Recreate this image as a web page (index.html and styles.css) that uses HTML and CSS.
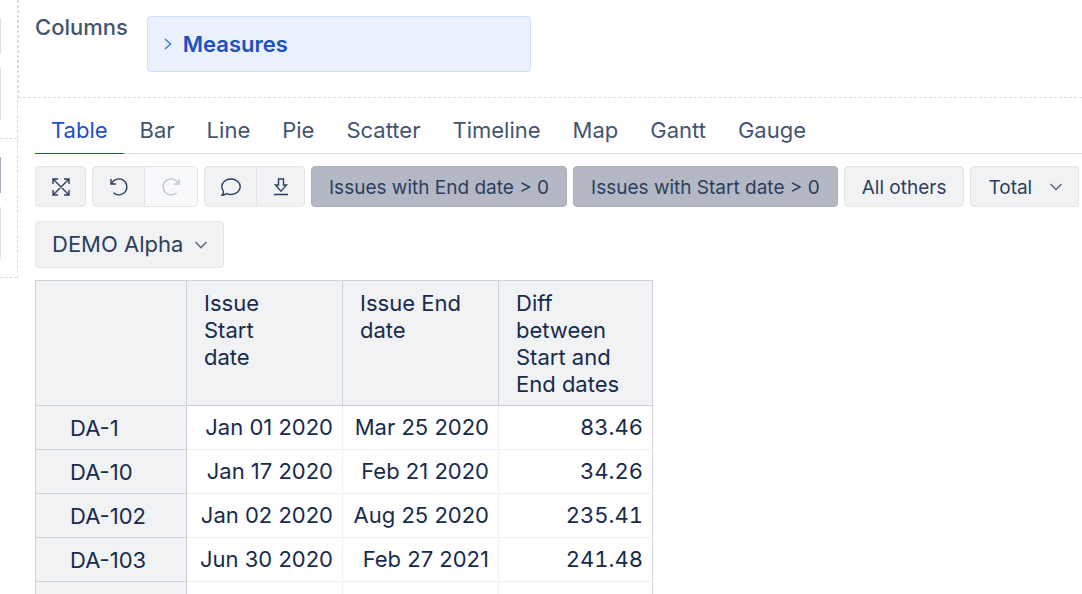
FILE: index.html
```html
<!DOCTYPE html>
<html lang="en">
  <head>
    <title>Report</title>
    <meta charset="UTF-8" />
    <link rel="stylesheet" href="styles.css">
  </head>
  <body>
    <div class="report">

      <aside class="sidebar">
        <div class="sidebar__section">
          <div class="sidebar__item"></div>
          <div class="sidebar__item sidebar__item--tall"></div>
        </div>
        <div class="sidebar__section">
          <div class="sidebar__item sidebar__item--active"></div>
          <div class="sidebar__item sidebar__item--tall"></div>
        </div>
      </aside>

      <main class="content">
        <section class="columns">
          <h2 class="columns__title">Columns</h2>
          <button type="button" class="measures">
            <svg class="measures__arrow" viewBox="0 0 8 14" fill="none" stroke="currentColor" stroke-width="1.5"><path d="M1 2l5.500 5L1 12" /></svg>
            <span>Measures</span>
          </button>
        </section>

        <nav class="tabs">
          <a class="tabs__item tabs__item--active" href="#table">Table</a>
          <a class="tabs__item" href="#bar">Bar</a>
          <a class="tabs__item" href="#line">Line</a>
          <a class="tabs__item" href="#pie">Pie</a>
          <a class="tabs__item" href="#scatter">Scatter</a>
          <a class="tabs__item" href="#timeline">Timeline</a>
          <a class="tabs__item" href="#map">Map</a>
          <a class="tabs__item" href="#gantt">Gantt</a>
          <a class="tabs__item" href="#gauge">Gauge</a>
        </nav>

        <div class="toolbar">
          <button type="button" class="btn btn--icon" aria-label="Full screen">
            <svg class="icon" viewBox="0 0 20 20"><path d="M2 2l16 16M18 2L2 18M2 7V2h5M13 2h5v5M18 13v5h-5M7 18H2v-5" /></svg>
          </button>
          <div class="btn-group">
            <button type="button" class="btn btn--icon" aria-label="Undo">
              <svg class="icon" viewBox="0 0 20 20"><path d="M2 2v5h5M2.500 6.800A8 8 0 1 1 4.500 15.800" /></svg>
            </button>
            <button type="button" class="btn btn--icon" aria-label="Redo" disabled>
              <svg class="icon" viewBox="0 0 20 20"><path d="M18 2v5h-5M17.500 6.800A8 8 0 1 0 15.500 15.800" /></svg>
            </button>
          </div>
          <div class="btn-group">
            <button type="button" class="btn btn--icon" aria-label="Comment">
              <svg class="icon" viewBox="0 0 20 20"><path d="M1 18.200c1.300-1.200 1.700-2.800 1.200-4.300C1.300 12.700.8 11.300.8 9.800.8 5.500 4.900 2 10 2s9.200 3.500 9.200 7.800-4.100 7.700-9.200 7.700c-1.600 0-3-.3-4.300-.9-1.400.9-3 1.600-4.700 1.600z" /></svg>
            </button>
            <button type="button" class="btn btn--icon btn--narrow" aria-label="Download">
              <svg class="icon" viewBox="0 0 20 20"><path d="M3 17.500h14M7.500 2h5v6H15.500L10 14.200 4.500 8h3z" /></svg>
            </button>
          </div>
          <button type="button" class="btn btn--selected">Issues with End date &gt; 0</button>
          <button type="button" class="btn btn--selected">Issues with Start date &gt; 0</button>
          <button type="button" class="btn">All others</button>
          <div class="dropdown">
            <select class="btn dropdown__select" aria-label="Total">
              <option>Total</option>
            </select>
            <svg class="dropdown__arrow" viewBox="0 0 14 8"><path d="M1.500 1L7 6.500 12.500 1" /></svg>
          </div>
          <div class="dropdown dropdown--project">
            <select class="btn dropdown__select" aria-label="Project">
              <option>DEMO Alpha</option>
            </select>
            <svg class="dropdown__arrow" viewBox="0 0 14 8"><path d="M1.500 1L7 6.500 12.500 1" /></svg>
          </div>
        </div>

        <table class="results">
          <colgroup>
            <col class="results__issue">
            <col class="results__date">
            <col class="results__date">
            <col class="results__diff">
          </colgroup>
          <thead>
            <tr>
              <td></td>
              <th scope="col">Issue Start date</th>
              <th scope="col">Issue End date</th>
              <th scope="col">Diff between Start and End dates</th>
            </tr>
          </thead>
          <tbody>
            <tr>
              <th scope="row">DA-1</th>
              <td>Jan 01 2020</td>
              <td>Mar 25 2020</td>
              <td>83.46</td>
            </tr>
            <tr>
              <th scope="row">DA-10</th>
              <td>Jan 17 2020</td>
              <td>Feb 21 2020</td>
              <td>34.26</td>
            </tr>
            <tr>
              <th scope="row">DA-102</th>
              <td>Jan 02 2020</td>
              <td>Aug 25 2020</td>
              <td>235.41</td>
            </tr>
            <tr>
              <th scope="row">DA-103</th>
              <td>Jun 30 2020</td>
              <td>Feb 27 2021</td>
              <td>241.48</td>
            </tr>
            <tr>
              <th scope="row"></th>
              <td></td>
              <td></td>
              <td></td>
            </tr>
          </tbody>
        </table>
      </main>

    </div>
  </body>
</html>
```
FILE: styles.css
```css
* {
  box-sizing: border-box;
}

body {
  margin: 0;
  font-family: 'Inter', Arial, sans-serif;
  font-size: 22px;
  line-height: 27px;
  color: #172b4d;
  background: #ffffff;
}

.report {
  display: flex;
  align-items: flex-start;
  height: 100vh;
  overflow: hidden;
}

/* sidebar */

.sidebar {
  flex: none;
  width: 18px;
  border-right: 1px dashed #dcdde0;
}

.sidebar__section {
  display: flex;
  flex-direction: column;
  gap: 14px;
  height: 139px;
  padding-top: 18px;
  border-bottom: 1px dashed #dcdde0;
}

.sidebar__item {
  width: 1px;
  height: 36px;
  background: #dfe1e6;
}

.sidebar__item--tall {
  height: 52px;
}

.sidebar__item--active {
  background: #a5adba;
}

/* content */

.content {
  flex: 1;
  min-width: 0;
}

.columns {
  display: flex;
  align-items: flex-start;
  gap: 19px;
  padding: 16px 16px 25px;
  border-left: 1px dashed #dcdde0;
  border-bottom: 1px dashed #dcdde0;
}

.columns__title {
  margin: 0;
  font-size: 22px;
  line-height: 22px;
  font-weight: 500;
  color: #44546f;
}

.measures {
  display: flex;
  align-items: center;
  gap: 11px;
  width: 384px;
  height: 56px;
  padding: 0 16px;
  font: inherit;
  font-weight: 600;
  color: #1d50c4;
  background: #eaf1fd;
  border: 1px solid #ccdffb;
  border-radius: 4px;
  cursor: pointer;
}

.measures__arrow {
  width: 8px;
  height: 14px;
  color: #3b7cf0;
}

.tabs {
  display: flex;
  margin-left: 17px;
  padding-top: 12px;
  border-bottom: 1px solid #dcdde0;
}

.tabs__item {
  height: 44px;
  margin-bottom: -1px;
  padding: 7px 16px;
  color: #44546f;
  text-decoration: none;
}

.tabs__item--active {
  color: #1d50c4;
  border-bottom: 1px solid #1d50c4;
}

/* toolbar */

.toolbar {
  display: flex;
  flex-wrap: wrap;
  gap: 14px 6px;
  margin: 12px 0 12px 17px;
}

.btn {
  height: 41px;
  padding: 2px 17px 0;
  font: inherit;
  font-size: 19px;
  color: #2c3e5d;
  background: #f1f2f4;
  border: 1px solid #e3e5e9;
  border-radius: 4px;
  cursor: pointer;
}

.btn--selected {
  background: #b3b8c4;
  border-color: #a8afbd;
}

.btn--icon {
  display: flex;
  align-items: center;
  justify-content: center;
  width: 51px;
  padding: 0;
}

.btn:disabled {
  color: #c1c5cf;
  background: #f8f9fb;
}

.btn-group {
  display: flex;
}

.btn-group .btn {
  width: 53px;
}

.btn-group .btn:disabled {
  width: 54px;
}

.btn-group .btn--narrow {
  width: 49px;
}

.btn-group .btn:first-child {
  border-radius: 4px 0 0 4px;
}

.btn-group .btn:last-child {
  margin-left: -1px;
  border-radius: 0 4px 4px 0;
}

.icon {
  width: 20px;
  height: 20px;
  fill: none;
  stroke: currentColor;
  stroke-width: 1.4;
}

.dropdown {
  position: relative;
}

.dropdown__select {
  appearance: none;
  padding-right: 46px;
}

.dropdown__arrow {
  position: absolute;
  top: 50%;
  right: 16px;
  width: 14px;
  height: 8px;
  margin-top: -4px;
  fill: none;
  stroke: #626f86;
  stroke-width: 1.6;
  pointer-events: none;
}

.dropdown--project .dropdown__select {
  height: 47px;
  padding: 0 39px 0 16px;
  font-size: 22px;
}

/* results table */

.results {
  margin-left: 17px;
  table-layout: fixed;
  width: 618px;
  border-collapse: collapse;
  border: 1px solid #cfd2d9;
}

.results__issue {
  width: 151px;
}

.results__date {
  width: 156px;
}

.results__diff {
  width: 154px;
}

.results th,
.results td {
  padding: 8px;
  font-weight: 400;
  text-align: left;
  vertical-align: top;
}

.results thead th,
.results thead td,
.results tbody th {
  background: #f1f2f4;
  border: 1px solid #cfd2d9;
}

.results thead th {
  padding: 9px 32px 7px 17px;
}

.results thead td + th {
  padding-right: 48px;
}

.results tbody th {
  height: 44px;
  padding: 9px 8px 7px 34px;
}

.results tbody td {
  padding-right: 9px;
  text-align: right;
  white-space: nowrap;
  border-bottom: 1px solid #f0f1f4;
}

.results tbody td + td {
  border-left: 1px solid #f0f1f4;
}

.results tbody td:last-child {
  font-variant-numeric: tabular-nums;
}
```
